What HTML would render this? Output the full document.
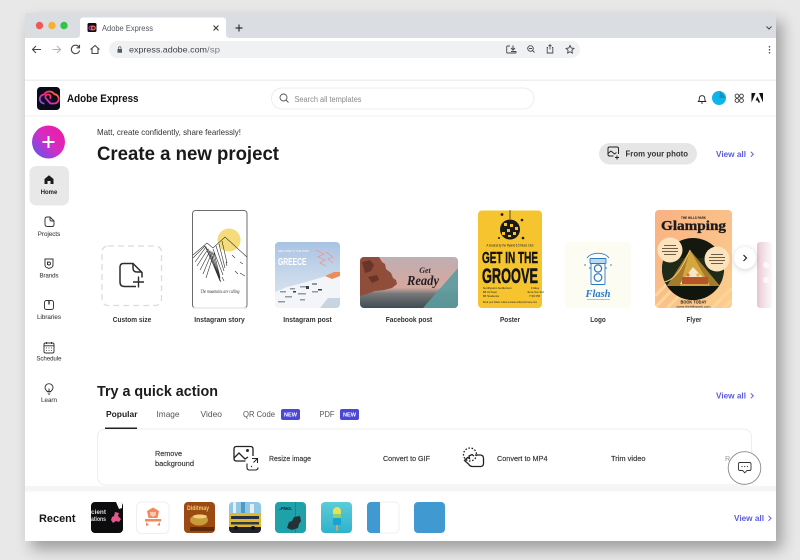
<!DOCTYPE html>
<html><head><meta charset="utf-8"><title>Adobe Express</title>
<style>
html,body{margin:0;padding:0;width:800px;height:560px;overflow:hidden;background:#e8e8e8}
svg{display:block;position:absolute;left:0;top:0;font-family:"Liberation Sans",sans-serif;filter:blur(.25px)}
#win{position:absolute;left:25px;top:13px;width:751px;height:528px;background:#fff;box-shadow:6px 8px 14px rgba(0,0,0,.32)}
</style></head><body>
<div id="win"></div>
<svg width="800" height="560" viewBox="0 0 800 560" xmlns="http://www.w3.org/2000/svg">
<defs>
<linearGradient id="plus" x1="1" y1="0" x2="0" y2="1"><stop offset="0" stop-color="#f5179a"/><stop offset=".5" stop-color="#d52cc4"/><stop offset="1" stop-color="#4f5cf0"/></linearGradient>
<linearGradient id="ring" x1="0" y1="1" x2="1" y2="0"><stop offset="0" stop-color="#5a5cf0"/><stop offset=".35" stop-color="#e02bc0"/><stop offset=".7" stop-color="#ff3a4a"/><stop offset="1" stop-color="#ffb02a"/></linearGradient>
<linearGradient id="gk" x1="0" y1="0" x2="0" y2="1"><stop offset="0" stop-color="#a9c2e4"/><stop offset=".5" stop-color="#c8d8ea"/><stop offset="1" stop-color="#dfe6ef"/></linearGradient>
<linearGradient id="fb" x1="0" y1="0" x2="0" y2="1"><stop offset="0" stop-color="#bfaeb2"/><stop offset=".6" stop-color="#d6a89e"/><stop offset=".72" stop-color="#77787a"/><stop offset="1" stop-color="#3f4b52"/></linearGradient>
<linearGradient id="fl" x1="0" y1="0" x2="1" y2="1"><stop offset="0" stop-color="#f9b183"/><stop offset="1" stop-color="#fbcf8f"/></linearGradient>
<linearGradient id="nx" x1="0" y1="0" x2="1" y2="0"><stop offset="0" stop-color="#e8c3cf"/><stop offset="1" stop-color="#f3e4e9" stop-opacity=".3"/></linearGradient>
<linearGradient id="pop" x1="0" y1="0" x2="0" y2="1"><stop offset="0" stop-color="#5ccbd8"/><stop offset="1" stop-color="#2fb2cc"/></linearGradient>
<clipPath id="cFb"><rect x="360" y="257" width="98" height="51" rx="4"/></clipPath>
<clipPath id="cIg"><rect x="275" y="242" width="65" height="66" rx="4"/></clipPath>
<clipPath id="cFl"><rect x="655" y="210" width="77" height="98" rx="4"/></clipPath>
<clipPath id="cCi"><circle cx="693" cy="269" r="31"/></clipPath>
<clipPath id="cR1"><rect x="91" y="502" width="32" height="31" rx="4"/></clipPath>
<clipPath id="cR3"><rect x="184" y="502" width="31" height="31" rx="4"/></clipPath>
<clipPath id="cR4"><rect x="229" y="502" width="32" height="31" rx="4"/></clipPath>
<clipPath id="cR5"><rect x="275" y="502" width="31" height="31" rx="4"/></clipPath>
<clipPath id="cR7"><rect x="367" y="502" width="32" height="31" rx="4"/></clipPath>
</defs>

<!-- Browser chrome -->
<rect x="25" y="13" width="751" height="25" fill="#dadde1"/>
<circle cx="39.500" cy="25.500" r="3.700" fill="#ed5a55"/><circle cx="52" cy="25.500" r="3.700" fill="#f5b12f"/><circle cx="64" cy="25.500" r="3.700" fill="#35c24a"/>
<path d="M76 38q4 0 4-4V21q0-3.500 3.500-3.500h139q3.500 0 3.500 3.500v13q0 4 4 4z" fill="#fff"/>
<rect x="87.500" y="23" width="9" height="9" rx="1.500" fill="#0d0d1a"/><circle cx="91" cy="28" r="2" fill="none" stroke="#e0309c" stroke-width="1"/><circle cx="93.200" cy="28" r="2" fill="none" stroke="#ff8a2a" stroke-width="1"/>
<text x="102" y="31" font-size="7.800" fill="#55585c" textLength="51" lengthAdjust="spacingAndGlyphs">Adobe Express</text>
<path d="M213.500 25.500l5 5m0-5l-5 5" stroke="#333" stroke-width="1"/>
<path d="M239 24.500v7m-3.500-3.500h7" stroke="#333" stroke-width="1.200"/>
<path d="M766.500 26.500l2.500 2.500 2.500-2.500" fill="none" stroke="#444" stroke-width="1"/>
<g fill="none" stroke="#45484c" stroke-width="1.100">
<path d="M33 49.500h8M36 46l-3.500 3.500L36 53"/>
<path d="M52.500 49.500h8M57 46l3.500 3.500L57 53" stroke="#b4b6b9"/>
<path d="M79 47a4.200 4.200 0 1 0 .6 3.500M79.500 44.800v3h-3"/>
<path d="M90.500 49.500l4.500-4 4.500 4M92 48.500v5h6v-5"/>
</g>
<rect x="109" y="41" width="471" height="17" rx="8.500" fill="#f0f1f3"/>
<rect x="117.500" y="49" width="4.500" height="3.800" rx=".6" fill="#55585c"/><path d="M118.500 49v-1a1.250 1.250 0 0 1 2.500 0v1" fill="none" stroke="#55585c" stroke-width=".7"/>
<text x="129" y="52.500" font-size="8.400" fill="#3f4246" textLength="78" lengthAdjust="spacingAndGlyphs">express.adobe.com</text><text x="207" y="52.500" font-size="8.400" fill="#7b7e82" textLength="13" lengthAdjust="spacingAndGlyphs">/sp</text>
<g fill="none" stroke="#45484c" stroke-width=".9">
<path d="M510 46h-2.500q-.8 0-.8.800v5.400q0 .8.800.8h7.800q.8 0 .8-.8v-1"/><path d="M513 45.500v4m-2-1.500l2 2 2-2M511 51.500h5" stroke-width="1"/>
<circle cx="530.500" cy="48.500" r="2.800"/><path d="M532.500 50.500l2 2M529 48.500h3"/>
<path d="M548 47.500h-.8v5.500h5.600v-5.500H552M550 49.500v-4.500m-1.500 1.200l1.500-1.500 1.500 1.500"/>
<path d="M570 45.500l1.200 2.500 2.700.4-2 1.900.5 2.700-2.400-1.300-2.400 1.300.5-2.700-2-1.900 2.700-.4z"/>
</g>
<g fill="#45484c"><circle cx="769.500" cy="46.800" r=".8"/><circle cx="769.500" cy="49.800" r=".8"/><circle cx="769.500" cy="52.800" r=".8"/></g>

<!-- App header -->
<rect x="25" y="79.500" width="751" height="1.500" fill="#efefef"/>
<rect x="25" y="115.500" width="751" height="1" fill="#f2f2f2"/>
<rect x="37" y="87" width="23" height="23" rx="3.500" fill="#0b0b19"/>
<path d="M44.500 103.500a4.500 4.500 0 0 1-.4-9 6 6 0 0 1 10.200-.3 4.600 4.600 0 0 1-.4 9.300h-3.500l-4-4.500a2.600 2.600 0 1 1 3.500-.3" fill="none" stroke="url(#ring)" stroke-width="1.800"/>
<text x="67" y="102" font-size="11.200" font-weight="700" fill="#111" textLength="71.500" lengthAdjust="spacingAndGlyphs">Adobe Express</text>
<rect x="271.500" y="88" width="262.500" height="21" rx="10.500" fill="#fff" stroke="#ececec"/>
<circle cx="283.500" cy="97.500" r="3.500" fill="none" stroke="#555" stroke-width=".9"/><path d="M286 100l2.500 2.500" stroke="#555" stroke-width=".9"/>
<text x="294.500" y="102" font-size="7.800" fill="#8a8a8a" textLength="67" lengthAdjust="spacingAndGlyphs">Search all templates</text>
<path d="M698.500 101.500c1-1 .8-2 .8-3.500a2.800 2.800 0 0 1 5.500 0c0 1.500-.2 2.500.8 3.500z" fill="none" stroke="#222" stroke-width=".9"/><path d="M701 103h2" stroke="#222" stroke-width=".9"/>
<circle cx="719" cy="98" r="7" fill="#0db4ea"/><path d="M720 91.100l5.900 6.900h-6.500z" fill="#1d8fb8"/>
<g fill="none" stroke="#333" stroke-width=".9"><circle cx="737" cy="96" r="1.900"/><circle cx="741.500" cy="96" r="1.900"/><circle cx="737" cy="100.500" r="1.900"/><circle cx="741.500" cy="100.500" r="1.900"/></g>
<path d="M751.500 93h4l-4 9.500zM759 93h4v9.500zM757.300 96.500l2.900 6h-1.800l-.8-2h-2z" fill="#111"/>

<!-- Sidebar -->
<circle cx="48.500" cy="142" r="16.500" fill="url(#plus)"/>
<path d="M48.500 136v12m-6-6h12" stroke="#fff" stroke-width="2"/>
<rect x="29.500" y="166" width="39.500" height="39.500" rx="7" fill="#e8e8e8"/>
<path d="M44.500 184v-5l4.500-3.800 4.500 3.800v5h-3v-3h-3v3z" fill="#1c1c1c"/>
<text x="49" y="194" font-size="6.300" font-weight="700" text-anchor="middle" fill="#222" textLength="16.500" lengthAdjust="spacingAndGlyphs">Home</text>
<g fill="none" stroke="#333" stroke-width=".95">
<path d="M47 217h3l4 4v3.500q0 2-2 2h-4.500q-2.500 0-2.500-2.500v-4.500q0-2.500 2-2.500zM50 217.300v2.200q0 1.500 1.500 1.500h2.500"/>
<path d="M45 259h8v6q0 1.800-1.500 2.500l-2.500 1-2.500-1Q45 266.800 45 265z"/><circle cx="49" cy="263.500" r="1.500"/><path d="M47.500 261.500v3.500"/>
<rect x="44.500" y="300.500" width="9" height="9" rx="2"/>
<rect x="44" y="343" width="10" height="10" rx="1.500"/><path d="M44 345.800h10"/><path d="M46.500 342v2m5-2v2"/><path d="M46 348h1m1.500 0h1m1.500 0h1M46 350.500h1m1.500 0h1m1.500 0h1" stroke-width=".7"/>
<path d="M47.200 391.500c-.2-1-2.200-1.500-2.200-3.800a4 4 0 0 1 8 0c0 2.300-2 2.800-2.200 3.800z"/><path d="M47.500 393h3m-2.200 1.300h1.400" stroke-width=".8"/><path d="M49 391.500v-3"/>
</g>
<rect x="48.300" y="300.500" width="1.400" height="4" fill="#333"/>
<g font-size="6.300" text-anchor="middle" fill="#444" stroke="#444" stroke-width=".1">
<text x="49" y="236" textLength="22.500" lengthAdjust="spacingAndGlyphs">Projects</text>
<text x="49" y="277.500" textLength="19" lengthAdjust="spacingAndGlyphs">Brands</text>
<text x="49" y="319" textLength="24" lengthAdjust="spacingAndGlyphs">Libraries</text>
<text x="49" y="360.500" textLength="25" lengthAdjust="spacingAndGlyphs">Schedule</text>
<text x="49" y="402" textLength="16" lengthAdjust="spacingAndGlyphs">Learn</text>
</g>

<!-- Hero -->
<text x="97" y="135" font-size="8.500" fill="#333" textLength="144" lengthAdjust="spacingAndGlyphs">Matt, create confidently, share fearlessly!</text>
<text x="97" y="160" font-size="19.500" font-weight="700" fill="#1a1a1a" textLength="182" lengthAdjust="spacingAndGlyphs">Create a new project</text>
<rect x="599" y="143" width="98" height="21.500" rx="10.700" fill="#e6e6e6"/>
<g fill="none" stroke="#222" stroke-width="1"><path d="M618.500 154v-5.500q0-1.500-1.500-1.500h-7.500q-1.500 0-1.500 1.500v6q0 1.500 1.500 1.500h4"/><path d="M608 153.500l3-2.500 3.500 3 2-1.500"/><path d="M617 155.500v4m-2-2h4"/></g>
<text x="625.500" y="156.500" font-size="8.400" font-weight="700" fill="#333" textLength="62.500" lengthAdjust="spacingAndGlyphs">From your photo</text>
<text x="716" y="156.800" font-size="8.400" font-weight="700" fill="#5b5be0" textLength="30" lengthAdjust="spacingAndGlyphs">View all</text>
<path d="M750.800 151.800l2.500 2.500-2.500 2.500" fill="none" stroke="#5b5be0" stroke-width="1"/>

<!-- Custom size -->
<rect x="102" y="246" width="59.500" height="59.500" rx="6" fill="#fff" stroke="#dcdcdc" stroke-width="1.300" stroke-dasharray="6 4"/>
<path d="M136 286.500h-11.500q-4.500 0-4.500-4.500v-15q0-3.500 3.500-3.500h9.500l9 9v5M133 263.500v4.500q0 4 4 4h5" fill="none" stroke="#2c2c2c" stroke-width="1.500"/>
<path d="M138.500 276.500v11m-5.500-5.500h11" stroke="#2c2c2c" stroke-width="1.400"/>
<text x="132" y="322" font-size="7.400" font-weight="700" text-anchor="middle" fill="#333" textLength="38.500" lengthAdjust="spacingAndGlyphs">Custom size</text>

<!-- Story -->
<rect x="192.500" y="210.500" width="54.500" height="97.500" rx="3" fill="#fff" stroke="#6c6c6c"/>
<path d="M193 308h54" stroke="#e8e8e8" stroke-width="1.500"/>
<circle cx="229" cy="240" r="11.500" fill="#f5db7a"/>
<g fill="none" stroke="#333" stroke-width=".6">
<path d="M193 255l14-12 6 5 12-11 22 20"/>
<path d="M193 258l12-12 16 36M195 262l11-15 14 34M197 266l11-17 12 31M200 270l10-19 10 28M203 274l9-22 8 26M206 278l8-25 6 24M213 249l10 26M216 246l8 25M219 244l6 24M222 241l5 22"/>
<path d="M232 255l3 3M240 262l3 2M235 271l3 3M222 277l2 4M226 262l1 4M240 273l5 3"/>
</g>
<text x="220" y="293" font-size="5" font-style="italic" font-family="Liberation Serif" text-anchor="middle" fill="#333" textLength="39" lengthAdjust="spacingAndGlyphs">The mountains are calling</text>
<text x="219.500" y="322" font-size="7.400" font-weight="700" text-anchor="middle" fill="#333" textLength="50.500" lengthAdjust="spacingAndGlyphs">Instagram story</text>

<!-- IG post -->
<g clip-path="url(#cIg)">
<rect x="275" y="242" width="65" height="66" fill="url(#gk)"/>
<path d="M275 292l12-5 12-3 14-4 13-4 14-4v36h-65z" fill="#f4f5f8"/>
<g fill="#8e9aa8"><rect x="280" y="291" width="6" height="1.500"/><rect x="290" y="288" width="5" height="1.500"/><rect x="300" y="286" width="6" height="1.500"/><rect x="285" y="296" width="7" height="1.500"/><rect x="298" y="293" width="8" height="1.500"/><rect x="312" y="283" width="5" height="2"/><rect x="312" y="291" width="6" height="1.500"/><rect x="278" y="301" width="7" height="1.500"/><rect x="300" y="299" width="5" height="1.500"/></g>
<g fill="#3d3f48"><rect x="306" y="286" width="3" height="3"/><rect x="293" y="291" width="3" height="1.500"/><rect x="318" y="289" width="4" height="1.500"/></g>
<path d="M325 276l9-4 6 0v4l-8 3z" fill="#ec8b5c"/><path d="M328 298h12v10h-20z" fill="#c9d4e2"/>
<path d="M316 250l8 4-6 3 7 3-5 3 6 3M326 252l7 5-5 2 5 4" fill="none" stroke="#e99a92" stroke-width=".8"/>
<text x="278" y="252" font-size="3" fill="#fff" textLength="31" lengthAdjust="spacingAndGlyphs">WELCOME TO THE PORT</text>
<text x="278" y="265" font-size="10.500" font-weight="700" fill="#fff" textLength="28.500" lengthAdjust="spacingAndGlyphs">GREECE</text>
</g>
<text x="307.500" y="322" font-size="7.400" font-weight="700" text-anchor="middle" fill="#333" textLength="48.500" lengthAdjust="spacingAndGlyphs">Instagram post</text>

<!-- Facebook post -->
<g clip-path="url(#cFb)">
<rect x="360" y="257" width="98" height="51" fill="url(#fb)"/>
<path d="M360 257h19l3 5 3 2 1 5 5 4 2 5 3 2 1 4-5 4-8 2-9 1-8 3-7 2z" fill="#8f4d3a"/>
<path d="M362 262l8-2 4 5-3 6-6 2zM368 277l9-2 2 5-7 3z" fill="#6a3529"/>
<path d="M458 268v40h-35z" fill="#5c9ca0" opacity=".9"/>
<text x="425" y="273" font-size="8" font-family="Liberation Serif" font-style="italic" font-weight="700" text-anchor="middle" fill="#2a2a2a">Get</text>
<text x="423" y="285" font-size="14" font-family="Liberation Serif" font-style="italic" font-weight="700" text-anchor="middle" fill="#1f1f1f" textLength="32" lengthAdjust="spacingAndGlyphs">Ready</text>
</g>
<text x="409" y="322" font-size="7.400" font-weight="700" text-anchor="middle" fill="#333" textLength="46.500" lengthAdjust="spacingAndGlyphs">Facebook post</text>

<!-- Poster -->
<rect x="478" y="210.500" width="64" height="97.500" rx="4" fill="#f6c42e"/>
<path d="M510 210v9" stroke="#222" stroke-width=".7"/>
<circle cx="510" cy="229.500" r="10" fill="#1a1a1a"/>
<g fill="#f6c42e"><rect x="504" y="223" width="3" height="3"/><rect x="510" y="224" width="3" height="3"/><rect x="515" y="227" width="3" height="3"/><rect x="507" y="229" width="3" height="3"/><rect x="513" y="232" width="3" height="3"/><rect x="502" y="232" width="3" height="3"/><rect x="508" y="235" width="3" height="2"/></g>
<g fill="#1a1a1a"><circle cx="502" cy="214.500" r="1.400"/><circle cx="522" cy="220" r="1.300"/><circle cx="499" cy="238" r="1"/><circle cx="523" cy="238" r="1.300"/></g>
<text x="510" y="246.500" font-size="3.200" text-anchor="middle" fill="#222" textLength="47" lengthAdjust="spacingAndGlyphs">A musical by the Ryland 6.5 Music Club</text>
<text x="510" y="263" font-size="15.500" font-weight="700" text-anchor="middle" fill="#141414" stroke="#141414" stroke-width=".4" textLength="56" lengthAdjust="spacingAndGlyphs">GET IN THE</text>
<text x="510" y="283" font-size="21" font-weight="700" text-anchor="middle" fill="#141414" stroke="#141414" stroke-width=".5" textLength="56" lengthAdjust="spacingAndGlyphs">GROOVE</text>
<g font-size="3" fill="#222"><text x="483" y="289">Northpoint Auditorium</text><text x="483" y="293">$5 At Door</text><text x="483" y="297">$5 Students</text><text x="531" y="289">Friday</text><text x="527" y="293">June the 3rd</text><text x="529" y="297">7:30 PM</text><text x="483" y="303" textLength="54" lengthAdjust="spacingAndGlyphs">Book your tickets online at www.northpoint-hsmp.com</text></g>
<text x="510" y="322" font-size="7.400" font-weight="700" text-anchor="middle" fill="#333" textLength="20" lengthAdjust="spacingAndGlyphs">Poster</text>

<!-- Logo -->
<rect x="565" y="242" width="66" height="66" rx="4" fill="#fdfcf3"/>
<g fill="none" stroke="#2b79c9" stroke-width=".9">
<path d="M587 258a12 8 0 0 1 22 0"/>
<rect x="590" y="258.500" width="16" height="5" rx="1" fill="#bcd8f2"/>
<rect x="591" y="263.500" width="14" height="21" rx="1"/>
<circle cx="598" cy="268.500" r="3.600" stroke-width="1.200"/><circle cx="598" cy="277.500" r="3.800" stroke-width="1.200"/>
<path d="M591 268h-2m16 0h2M585 264v2M611 264v2"/>
</g>
<text x="598" y="297" font-size="11" font-family="Liberation Serif" font-style="italic" font-weight="700" text-anchor="middle" fill="#2b79c9" textLength="25" lengthAdjust="spacingAndGlyphs">Flash</text>
<rect x="587" y="299" width="23" height="1" fill="#9cc3e8"/>
<text x="598" y="322" font-size="7.400" font-weight="700" text-anchor="middle" fill="#333" textLength="15.500" lengthAdjust="spacingAndGlyphs">Logo</text>

<!-- Flyer -->
<g clip-path="url(#cFl)">
<rect x="655" y="210" width="77" height="98" fill="url(#fl)"/>
<path d="M655 296l14-14m-14 26l24-26m-12 26l24-24M712 308l20-20m-8 20l8-8" stroke="#fcd59b" stroke-width="3"/>
<circle cx="693" cy="269" r="31" fill="#14180f"/>
<g clip-path="url(#cCi)">
<path d="M662 258h62v42h-62z" fill="#1f2a18"/>
<path d="M667 286l23-36 30 36z" fill="#a67c2c"/><path d="M680 286l10-36 20 36z" fill="#d5a63d"/>
<path d="M664 282q14-2 26-32" fill="none" stroke="#f0cc70" stroke-width="1"/>
<path d="M680 284l13-17 16 17z" fill="#f6e7c4"/>
<rect x="682" y="277" width="26" height="7" fill="#b6542a"/><circle cx="688" cy="275" r="1.600" fill="#e26b3c"/><circle cx="698" cy="275" r="1.600" fill="#e2b23c"/>
<path d="M662 286h62v14h-62z" fill="#10150e"/>
</g>
<circle cx="670" cy="250" r="12.500" fill="#fbe3bd"/><circle cx="717" cy="259" r="12.500" fill="#fbe3bd"/>
<g fill="#6b5b48"><rect x="664" y="245" width="12" height="1"/><rect x="662" y="248" width="16" height="1"/><rect x="662" y="251" width="16" height="1"/><rect x="664" y="254" width="12" height="1"/><rect x="711" y="254" width="12" height="1"/><rect x="709" y="257" width="16" height="1"/><rect x="709" y="260" width="16" height="1"/><rect x="711" y="263" width="12" height="1"/></g>
<text x="693.500" y="219" font-size="3.500" font-weight="700" text-anchor="middle" fill="#2a2018" textLength="25" lengthAdjust="spacingAndGlyphs">THE HILLS PARK</text>
<text x="693.500" y="230" font-size="14" font-weight="700" font-family="Liberation Serif" text-anchor="middle" fill="#1c1a1c" stroke="#1c1a1c" stroke-width=".35" textLength="65" lengthAdjust="spacingAndGlyphs">Glamping</text>
<text x="693.500" y="303.500" font-size="4.400" font-weight="700" text-anchor="middle" fill="#2a2018" textLength="26" lengthAdjust="spacingAndGlyphs">BOOK TODAY</text>
<text x="693.500" y="307.500" font-size="3" text-anchor="middle" fill="#2a2018" textLength="34" lengthAdjust="spacingAndGlyphs">www.thehillspark.com</text>
</g>
<text x="694" y="322" font-size="7.400" font-weight="700" text-anchor="middle" fill="#333" textLength="15" lengthAdjust="spacingAndGlyphs">Flyer</text>

<!-- Next -->
<rect x="757" y="242" width="15" height="66" rx="3" fill="url(#nx)"/>
<circle cx="766" cy="265" r="3" fill="#fff" opacity=".7"/><circle cx="766" cy="280" r="3" fill="#fff" opacity=".7"/>
<circle cx="745" cy="258" r="11" fill="#fff" style="filter:drop-shadow(0 1px 3px rgba(0,0,0,.18))"/>
<path d="M743.500 255l3 3-3 3" fill="none" stroke="#222" stroke-width="1.200"/>

<!-- Quick action -->
<text x="97" y="396" font-size="15" font-weight="700" fill="#1c1c1c" textLength="121" lengthAdjust="spacingAndGlyphs">Try a quick action</text>
<text x="716" y="398.500" font-size="8.400" font-weight="700" fill="#5b5be0" textLength="30" lengthAdjust="spacingAndGlyphs">View all</text>
<path d="M750.800 393.300l2.500 2.500-2.500 2.500" fill="none" stroke="#5b5be0" stroke-width="1"/>
<g font-size="8.200" fill="#555">
<text x="106" y="417.200" font-weight="700" fill="#222" textLength="31.500" lengthAdjust="spacingAndGlyphs">Popular</text>
<text x="156.500" y="417.200" textLength="23" lengthAdjust="spacingAndGlyphs">Image</text>
<text x="200.500" y="417.200" textLength="21.500" lengthAdjust="spacingAndGlyphs">Video</text>
<text x="243" y="417.200" textLength="32" lengthAdjust="spacingAndGlyphs">QR Code</text>
<text x="319.500" y="417.200" textLength="15" lengthAdjust="spacingAndGlyphs">PDF</text>
</g>
<rect x="281" y="409" width="19" height="11" rx="2" fill="#4b47d8"/><rect x="340" y="409" width="19" height="11" rx="2" fill="#4b47d8"/>
<g font-size="5.800" font-weight="700" fill="#fff" text-anchor="middle"><text x="290.500" y="416.700" textLength="13" lengthAdjust="spacingAndGlyphs">NEW</text><text x="349.500" y="416.700" textLength="13" lengthAdjust="spacingAndGlyphs">NEW</text></g>
<rect x="97.500" y="429" width="654" height="56" rx="8" fill="#fff" stroke="#eeeeee"/>
<rect x="105" y="427.500" width="32" height="1.500" fill="#222"/>
<g font-size="7.200" fill="#333" stroke="#333" stroke-width=".15">
<text x="155" y="456" textLength="27" lengthAdjust="spacingAndGlyphs">Remove</text>
<text x="155" y="466" textLength="39" lengthAdjust="spacingAndGlyphs">background</text>
<text x="269" y="461" textLength="42" lengthAdjust="spacingAndGlyphs">Resize image</text>
<text x="383" y="461" textLength="47" lengthAdjust="spacingAndGlyphs">Convert to GIF</text>
<text x="497" y="461" textLength="50.500" lengthAdjust="spacingAndGlyphs">Convert to MP4</text>
<text x="611" y="461" textLength="34.500" lengthAdjust="spacingAndGlyphs">Trim video</text>
<text x="725" y="461" fill="#999" stroke="none">R</text>
</g>
<g fill="none" stroke="#222" stroke-width="1.300">
<path d="M253 456v-7q0-2.500-2.500-2.500h-14q-2.500 0-2.500 2.500v9.500q0 2.500 2.500 2.500h9"/>
<path d="M234 458l5-5 6 6 3-2"/><circle cx="247.500" cy="450.500" r=".8"/>
<path d="M252 458.500h5.500v4.500M247 463.500v4q0 2.500 2.500 2.500h6q2.500 0 2.500-2.500" stroke-width="1.100"/><path d="M257.500 458.500l-4 4M251 466l1 1" stroke-width="1"/>
<circle cx="470" cy="454.500" r="6.500" stroke-dasharray="1.600 1.600"/>
<path d="M475 455h5q3.500 0 3.500 3.500v5q0 3-3 3h-8q-2.500 0-4-2.500l-4-3.500 3-3 2 1-.5-2.500 3-1.500 2 1.500"/>
</g>

<!-- Recent bar -->
<rect x="25" y="486" width="751" height="5.500" fill="#f5f5f5"/>
<rect x="25" y="491.500" width="751" height="49.500" fill="#fff"/>
<text x="39" y="522" font-size="11" font-weight="700" fill="#161616" textLength="36.500" lengthAdjust="spacingAndGlyphs">Recent</text>
<text x="734" y="521" font-size="8.400" font-weight="700" fill="#5b5be0" textLength="30" lengthAdjust="spacingAndGlyphs">View all</text>
<path d="M768.500 515.800l2.500 2.500-2.500 2.500" fill="none" stroke="#5b5be0" stroke-width="1"/>

<g clip-path="url(#cR1)"><rect x="91" y="502" width="32" height="31" fill="#0c0c0e"/>
<text x="91" y="514" font-size="6.500" fill="#ddd" font-weight="700" textLength="15" lengthAdjust="spacingAndGlyphs">cient</text><text x="91" y="521" font-size="6.500" fill="#ddd" font-weight="700" textLength="15" lengthAdjust="spacingAndGlyphs">ations</text>
<path d="M116 502h6v6l-3 1z" fill="#fff"/><path d="M115 512l4 1-1 3 3 3-2 3-3-1-3 2-2-3 1-3 2-1z" fill="#e8558a"/></g>
<rect x="136.500" y="502" width="32.500" height="31.500" rx="5" fill="#fff" stroke="#efefef"/>
<path d="M147 511l6-3.500 6 3.500-1.500 7h-9z" fill="#f5875a"/><path d="M150 512h6v3l-3 2-3-2z" fill="#fbc7ae"/><path d="M145 519h16v2.500h-16zM146 522l3 3-3 1zM160 522l-3 3 3 1z" fill="#f5875a"/>
<g clip-path="url(#cR3)"><rect x="184" y="502" width="31" height="31" fill="#9c4a14"/>
<text x="187" y="510" font-size="6.500" font-weight="700" fill="#f2cc66" textLength="22" lengthAdjust="spacingAndGlyphs">Diditmay</text>
<ellipse cx="199" cy="520" rx="9" ry="5.500" fill="#c99a3a"/><ellipse cx="200" cy="516.500" rx="7" ry="2" fill="#f0d178"/><rect x="190" y="527" width="24" height="4" fill="#5f2a0a"/></g>
<g clip-path="url(#cR4)"><rect x="229" y="502" width="32" height="31" fill="#8fc8e6"/>
<rect x="233" y="502" width="3" height="14" fill="#e8eef4"/><rect x="241" y="502" width="4" height="13" fill="#4e9cc6"/><rect x="250" y="504" width="4" height="11" fill="#e8eef4"/>
<rect x="229" y="513" width="32" height="14" fill="#e2b82a"/><rect x="231" y="516" width="28" height="3" fill="#233245"/><rect x="231" y="522" width="28" height="2.500" fill="#2e3a48"/><rect x="229" y="527" width="32" height="6" fill="#20242a"/><circle cx="236" cy="528" r="2" fill="#111"/><circle cx="253" cy="528" r="2" fill="#111"/></g>
<g clip-path="url(#cR5)"><rect x="275" y="502" width="31" height="31" fill="#1fa1aa"/>
<rect x="295" y="502" width="1" height="31" fill="#178890"/>
<text x="279" y="510" font-size="4.800" font-weight="700" font-style="italic" fill="#123">.PNG.</text>
<path d="M287 528l2-6 3-1 2-4 6-1 1 5-2 3-1 4-6 2z" fill="#243236"/></g>
<rect x="321" y="502" width="31" height="31" rx="4" fill="url(#pop)"/>
<rect x="334.500" y="508" width="5" height="18" rx="2.500" fill="#24a0cf"/><path d="M333 511a4 4 0 0 1 8 0v3h-8z" fill="#e6e15a"/><rect x="333" y="514" width="8" height="4" fill="#8ed06a"/><rect x="333" y="518" width="8" height="7" rx="1" fill="#19a2d6"/><rect x="336" y="525" width="2" height="5.500" fill="#d9a257"/>
<rect x="367.500" y="502" width="31.500" height="31" rx="4.500" fill="#fff" stroke="#efefef"/>
<g clip-path="url(#cR7)"><rect x="367" y="502" width="13" height="31" fill="#4199d1"/></g>
<rect x="414" y="502" width="31" height="31" rx="4" fill="#4199d1"/>

<!-- Chat -->
<circle cx="744.500" cy="468" r="16.300" fill="#fff" stroke="#8a8a8a" stroke-width=".9"/>
<path d="M740 462.500h9.500q1.500 0 1.500 1.500v5q0 1.500-1.500 1.500h-2.500l-2.200 2.300-2.200-2.300H740q-1.500 0-1.500-1.500v-5q0-1.500 1.500-1.500z" fill="none" stroke="#333" stroke-width=".9"/>
<g fill="#333"><circle cx="742" cy="466.500" r=".6"/><circle cx="744.700" cy="466.500" r=".6"/><circle cx="747.400" cy="466.500" r=".6"/></g>
</svg>
</body></html>
